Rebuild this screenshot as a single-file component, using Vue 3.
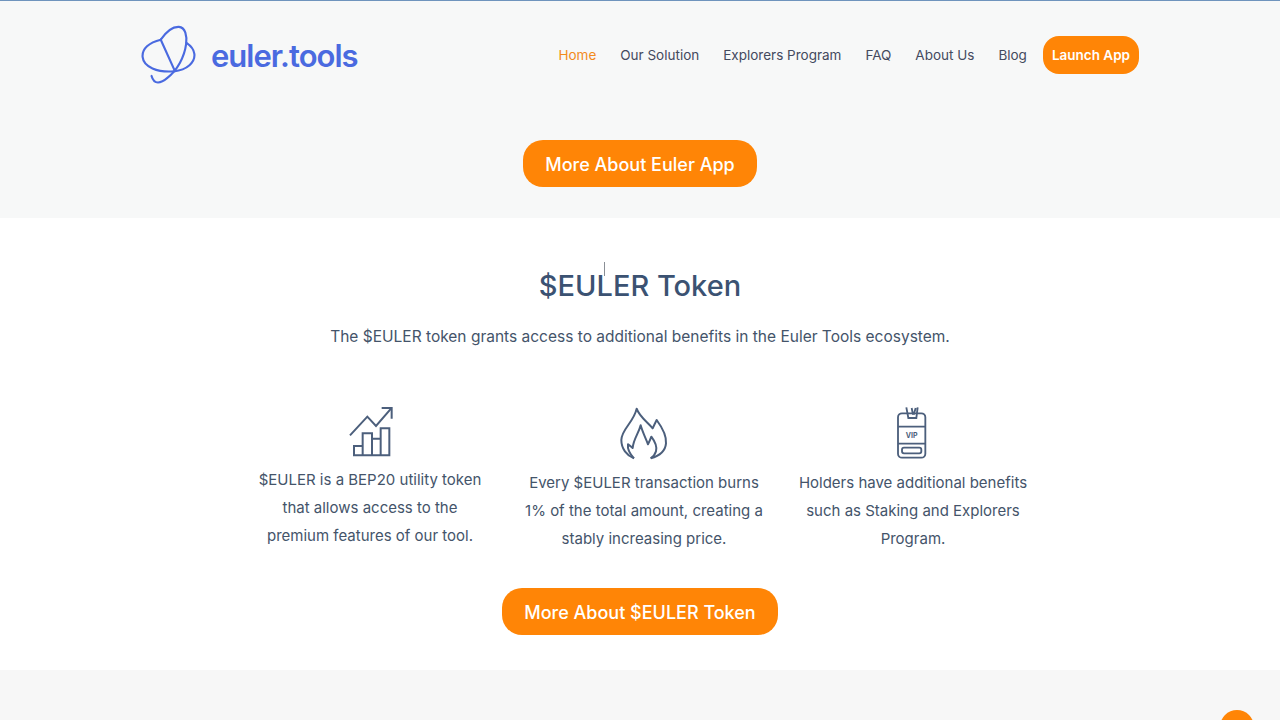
<template>
  <div class="page">
    <section class="top">
      <header class="header">
        <a class="brand">
          <svg class="brand-mark" viewBox="50 65 170 190" fill="none" stroke="#4a6ae0" stroke-width="6.5" stroke-linecap="round">
            <path d="M110 112C75 120 52 140 55 165C58 195 100 212 150 208C190 205 215 180 212 155C210 140 200 130 188 122" />
            <path d="M110 112C125 90 145 72 165 73C185 75 190 100 187 125C182 165 160 205 130 228C110 245 90 250 82 222" />
            <path d="M110 112L152 205" />
          </svg>
          <span class="brand-name">euler.tools</span>
        </a>
        <nav class="nav">
          <a
            v-for="link in links"
            :key="link"
            :class="['nav-link', { active: link === 'Home' }]"
          >{{ link }}</a>
          <a class="launch">Launch App</a>
        </nav>
      </header>
      <a class="btn">More About Euler App</a>
    </section>

    <section class="token">
      <h2 class="title">$EULER Token</h2>
      <p class="lead">The $EULER token grants access to additional benefits in the Euler Tools ecosystem.</p>

      <div class="features">
        <div class="feature first">
          <svg class="icon" viewBox="0 0 240 210" fill="none" stroke="#4c5f7c" stroke-width="6">
            <path d="M60 118L112 62L138 90L183 38" />
            <path d="M155 36H185V68" />
            <path d="M72 150H98V178H72ZM98 112H126V178H98ZM126 128H152V178H126ZM152 97H178V178H152Z" />
          </svg>
          <p>$EULER is a BEP20 utility token<br />that allows access to the<br />premium features of our tool.</p>
        </div>
        <div class="feature second">
          <svg class="icon" viewBox="0 0 240 210" fill="none" stroke="#4c5f7c" stroke-width="6" stroke-linejoin="round">
            <path d="M90 187C68 178 52 158 52 132C52 100 90 78 98 38C106 62 130 78 146 97C150 88 154 80 158 72C175 95 188 118 186 142C184 165 165 180 140 187" />
            <path d="M90 187C76 172 70 158 72 145C76 148 82 152 86 156C88 130 104 112 110 88C116 110 126 128 132 145C136 137 139 130 142 122C154 138 160 152 156 166C153 176 148 182 140 187" />
          </svg>
          <p>Every $EULER transaction burns<br />1% of the total amount, creating a<br />stably increasing price.</p>
        </div>
        <div class="feature third">
          <svg class="icon" viewBox="0 0 240 210" fill="none" stroke="#4c5f7c" stroke-width="5.5">
            <rect x="75" y="52" width="82" height="133" rx="12" />
            <path d="M75 92H157M75 143H157" />
            <rect x="87" y="155" width="58" height="17" rx="6" />
            <path d="M100 34L106 66H130L134 34M116 36L120 56M128 36L122 56" />
            <text x="116" y="125" class="vip">VIP</text>
          </svg>
          <p>Holders have additional benefits<br />such as Staking and Explorers<br />Program.</p>
        </div>
      </div>

      <a class="btn">More About $EULER Token</a>
      <span class="cursor"></span>
    </section>

    <section class="next"></section>
    <span class="to-top"></span>
  </div>
</template>

<script setup>
const links = ['Home', 'Our Solution', 'Explorers Program', 'FAQ', 'About Us', 'Blog'];
</script>

<style>
html,
body {
  margin: 0;
  overflow: hidden;
}
</style>

<style scoped>
.page {
  position: relative;
  width: 1280px;
  height: 720px;
  overflow: hidden;
  background: #fff;
  font-family: Inter, "Open Sans", sans-serif;
  color: #44546a;
}

.top {
  height: 217px;
  background: #f7f8f8;
  border-top: 1px solid #6f94bd;
  display: flex;
  flex-direction: column;
  align-items: center;
}

.header {
  width: 998px;
  height: 139px;
  display: flex;
  justify-content: space-between;
  align-items: flex-start;
}

.brand {
  display: flex;
  align-items: center;
  gap: 14px;
  margin-top: 23px;
}

.brand-mark {
  width: 56px;
  height: 63px;
}

.brand-name {
  font-size: 31px;
  font-weight: 600;
  letter-spacing: -1px;
  color: #4a6ae0;
}

.nav {
  display: flex;
  align-items: center;
  gap: 24px;
  margin-top: 35px;
  font-size: 13.5px;
}

.nav-link {
  color: #444a5e;
}

.nav-link.active {
  color: #f28a1c;
}

.launch {
  margin-left: -8px;
  height: 38px;
  line-height: 38px;
  padding: 0 9px;
  border-radius: 16px;
  background: #ff8506;
  color: #fff;
  font-weight: 600;
  font-size: 13.5px;
}

.btn {
  display: block;
  height: 47px;
  line-height: 50px;
  padding: 0 22px;
  border-radius: 20px;
  background: #ff8506;
  color: #fff;
  font-size: 18px;
  font-weight: 500;
}

.token {
  position: relative;
  height: 452px;
  display: flex;
  flex-direction: column;
  align-items: center;
}

.title {
  margin: 49px 0 0;
  font-size: 29px;
  line-height: 38px;
  font-weight: 500;
  color: #3b5272;
}

.lead {
  margin: 20px 0 0;
  font-size: 15.5px;
  line-height: 24px;
}

.features {
  display: flex;
  gap: 19px;
  margin-top: 47px;
  height: 192px;
  align-items: flex-start;
  transform: translateX(-1px);
}

.feature {
  text-align: center;
  font-size: 15px;
  line-height: 28px;
}

.feature p {
  margin: 0;
}

.icon {
  display: block;
  width: 80px;
  height: 70px;
  margin: 0 auto;
}

.first {
  width: 240px;
}

.first .icon {
  margin-bottom: 0;
}

.second {
  width: 270px;
}

.third {
  width: 230px;
}

.second .icon,
.third .icon {
  margin-bottom: 3px;
}

.vip {
  font-size: 21px;
  font-weight: 700;
  fill: #4c5f7c;
  stroke: none;
  text-anchor: middle;
}

.cursor {
  position: absolute;
  left: 604px;
  top: 44px;
  width: 1px;
  height: 14px;
  background: #8a8f96;
}

.next {
  height: 50px;
  background: #f7f7f7;
}

.to-top {
  position: absolute;
  left: 1220px;
  top: 710px;
  width: 34px;
  height: 34px;
  border-radius: 50%;
  background: #ff8506;
}
</style>
